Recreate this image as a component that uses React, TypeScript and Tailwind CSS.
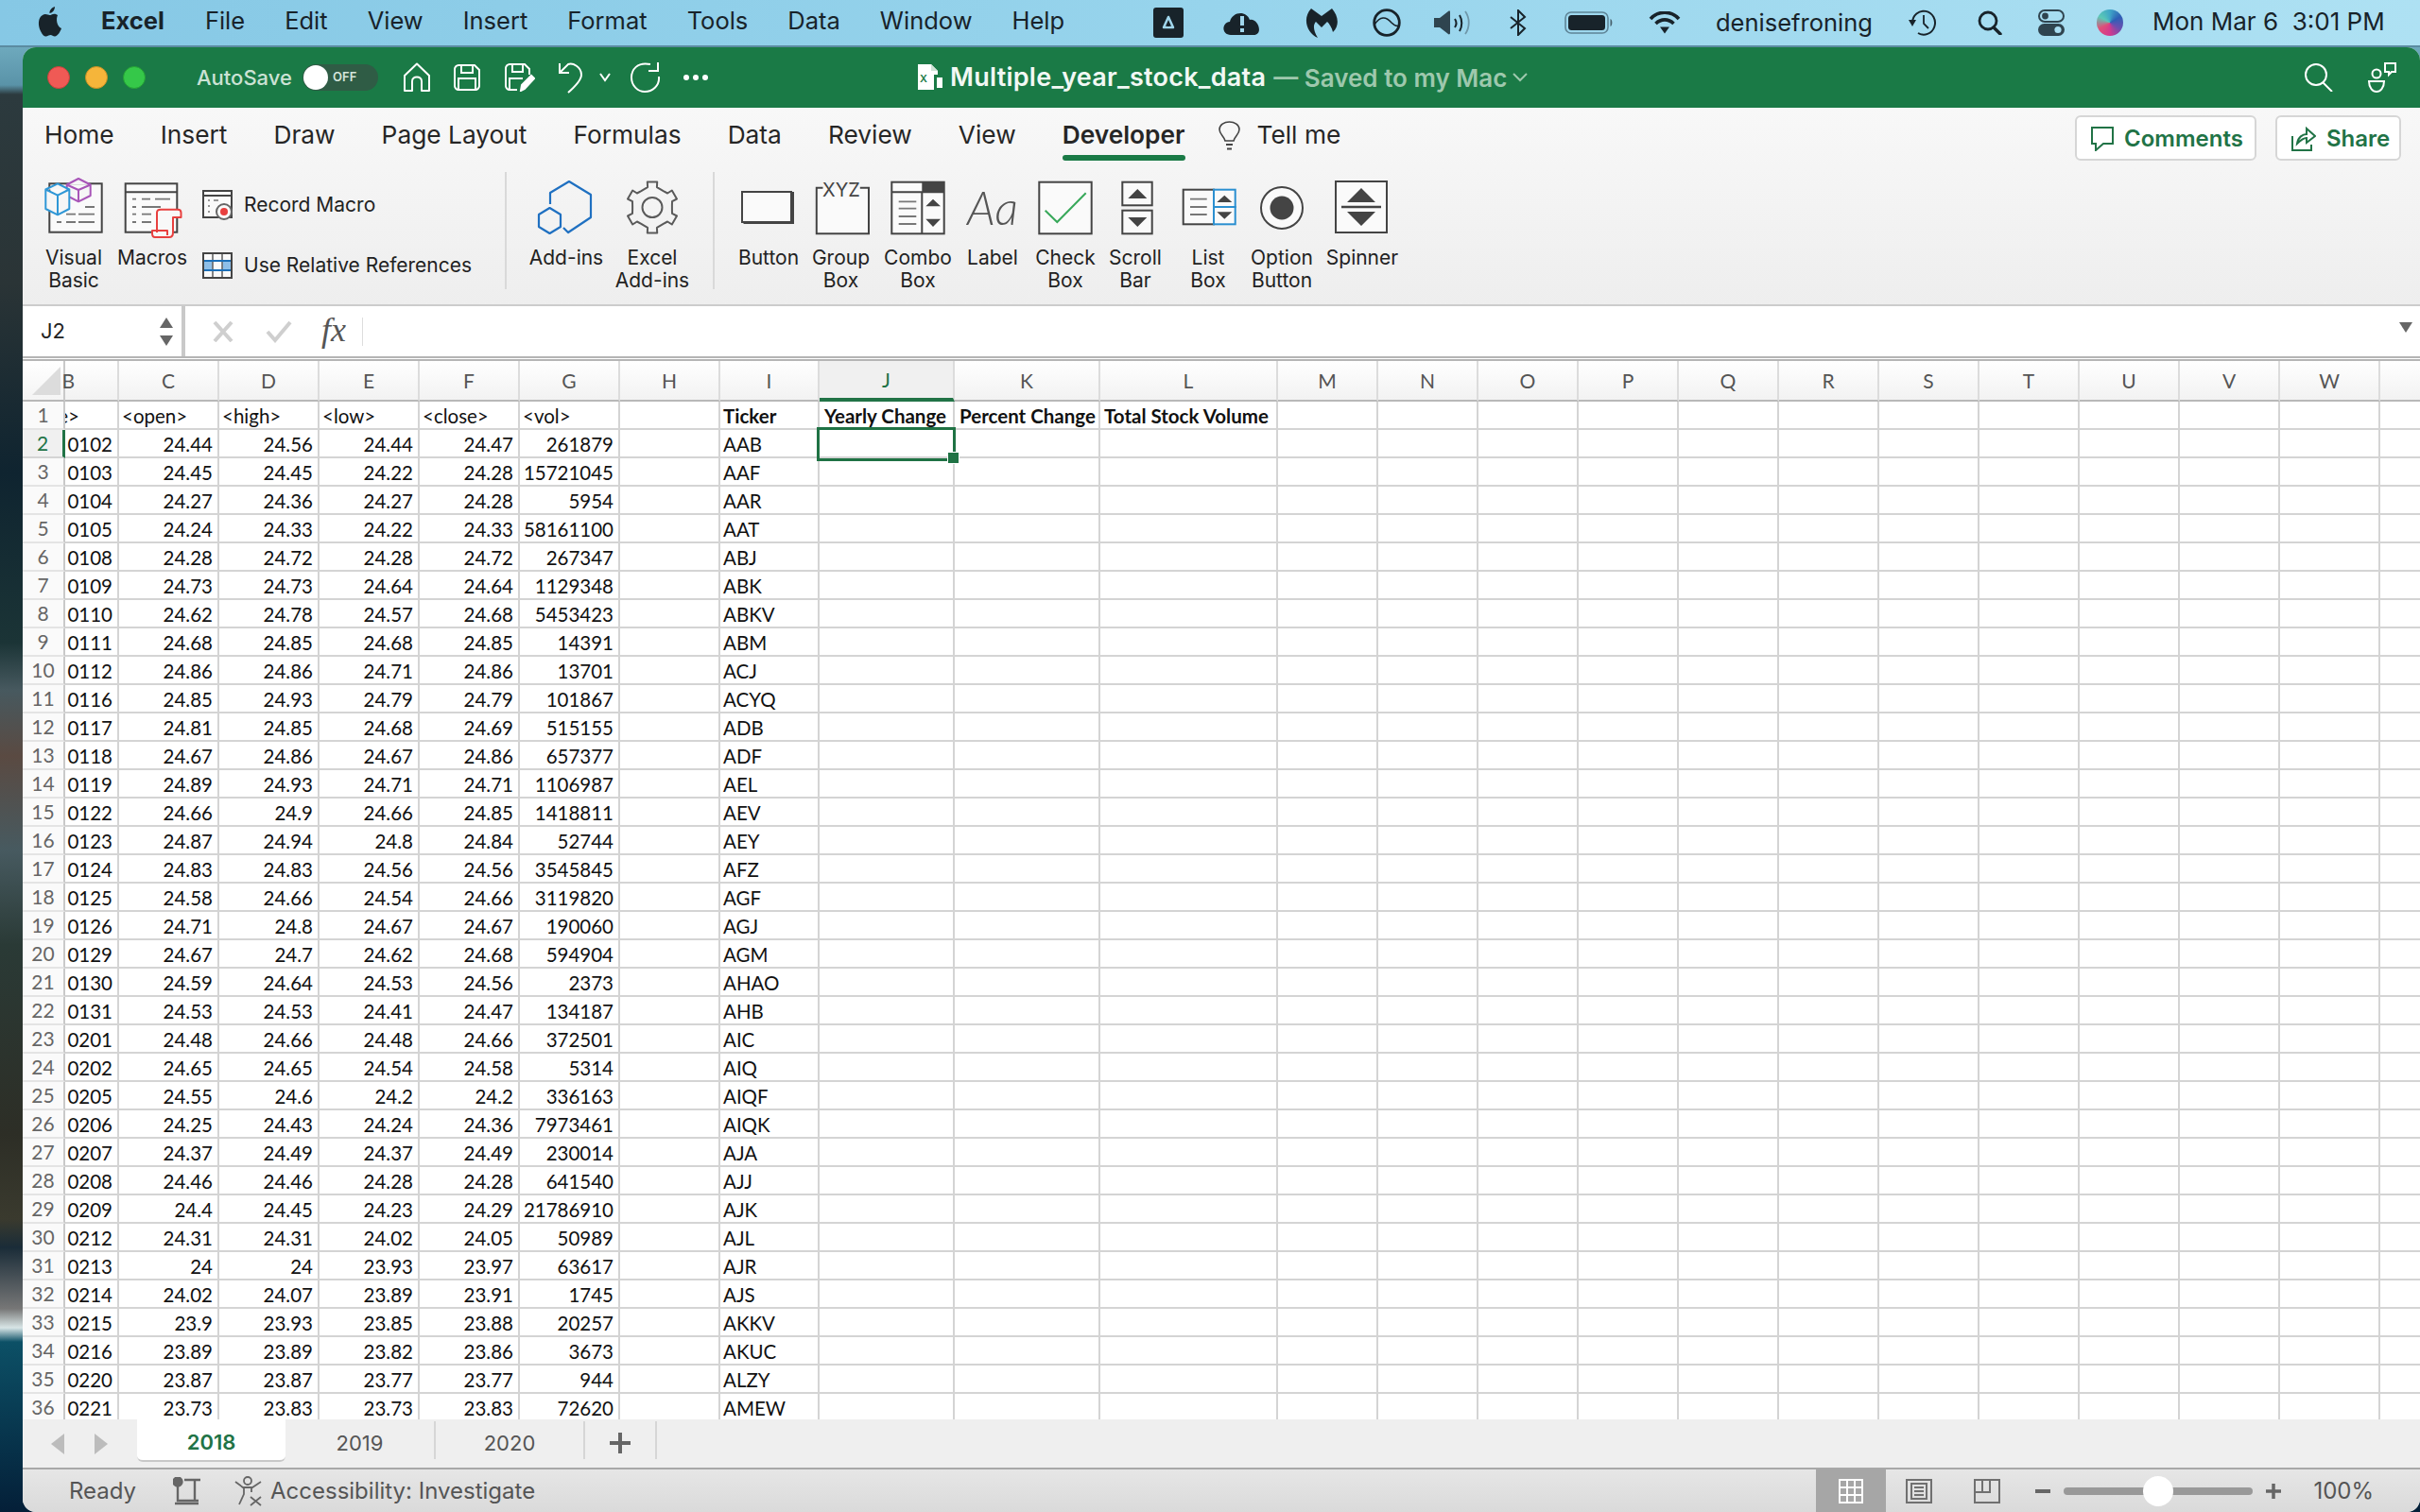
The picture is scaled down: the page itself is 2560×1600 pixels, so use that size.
import React from "react";

const S = "#444444";

const rowsData: string[][] = [
  ["0102","24.44","24.56","24.44","24.47","261879","AAB"],
  ["0103","24.45","24.45","24.22","24.28","15721045","AAF"],
  ["0104","24.27","24.36","24.27","24.28","5954","AAR"],
  ["0105","24.24","24.33","24.22","24.33","58161100","AAT"],
  ["0108","24.28","24.72","24.28","24.72","267347","ABJ"],
  ["0109","24.73","24.73","24.64","24.64","1129348","ABK"],
  ["0110","24.62","24.78","24.57","24.68","5453423","ABKV"],
  ["0111","24.68","24.85","24.68","24.85","14391","ABM"],
  ["0112","24.86","24.86","24.71","24.86","13701","ACJ"],
  ["0116","24.85","24.93","24.79","24.79","101867","ACYQ"],
  ["0117","24.81","24.85","24.68","24.69","515155","ADB"],
  ["0118","24.67","24.86","24.67","24.86","657377","ADF"],
  ["0119","24.89","24.93","24.71","24.71","1106987","AEL"],
  ["0122","24.66","24.9","24.66","24.85","1418811","AEV"],
  ["0123","24.87","24.94","24.8","24.84","52744","AEY"],
  ["0124","24.83","24.83","24.56","24.56","3545845","AFZ"],
  ["0125","24.58","24.66","24.54","24.66","3119820","AGF"],
  ["0126","24.71","24.8","24.67","24.67","190060","AGJ"],
  ["0129","24.67","24.7","24.62","24.68","594904","AGM"],
  ["0130","24.59","24.64","24.53","24.56","2373","AHAO"],
  ["0131","24.53","24.53","24.41","24.47","134187","AHB"],
  ["0201","24.48","24.66","24.48","24.66","372501","AIC"],
  ["0202","24.65","24.65","24.54","24.58","5314","AIQ"],
  ["0205","24.55","24.6","24.2","24.2","336163","AIQF"],
  ["0206","24.25","24.43","24.24","24.36","7973461","AIQK"],
  ["0207","24.37","24.49","24.37","24.49","230014","AJA"],
  ["0208","24.46","24.46","24.28","24.28","641540","AJJ"],
  ["0209","24.4","24.45","24.23","24.29","21786910","AJK"],
  ["0212","24.31","24.31","24.02","24.05","50989","AJL"],
  ["0213","24","24","23.93","23.97","63617","AJR"],
  ["0214","24.02","24.07","23.89","23.91","1745","AJS"],
  ["0215","23.9","23.93","23.85","23.88","20257","AKKV"],
  ["0216","23.89","23.89","23.82","23.86","3673","AKUC"],
  ["0220","23.87","23.87","23.77","23.77","944","ALZY"],
  ["0221","23.73","23.83","23.73","23.83","72620","AMEW"],
];

const wide = ["M","N","O","P","Q","R","S","T","U","V","W",""];

function MenuIcons() {
  return (
    <div className="flex items-center">
      <svg className="w-[32px] h-[32px] shrink-0" viewBox="0 0 32 32">
        <rect width="32" height="32" rx="3" fill="#18232a" />
        <path d="M11 21 L16 10 L21 21 Z" fill="none" stroke="#a0d6ec" strokeWidth="2.5" strokeLinejoin="round" />
        <path d="M14.5 20 L16 16.5 L17.5 20 Z" fill="#18232a" />
      </svg>
      <svg className="w-[40px] h-[28px] ml-[42px] shrink-0" viewBox="0 0 40 28">
        <path d="M8 27 C-2 27 -2 14 7 13 C9 3 24 0 28 11 C37 9 43 27 32 27 Z" fill="#18232a" />
        <rect x="18" y="7" width="4" height="10" fill="#a0d6ec" />
        <rect x="18" y="20" width="4" height="4" fill="#a0d6ec" />
      </svg>
      <svg className="w-[36px] h-[32px] ml-[46px] shrink-0" viewBox="0 0 36 32">
        <path d="M7 1 L18 9 L29 1 C35 8 38 18 30 26 C29 21 26 17 24 15 L18 21 L12 15 C9 18 9 24 14 32 C3 27 -3 12 7 1 Z" fill="#18232a" />
      </svg>
      <svg className="w-[30px] h-[30px] ml-[36px] shrink-0" viewBox="0 0 30 30">
        <circle cx="15" cy="15" r="13.3" fill="none" stroke="#18232a" strokeWidth="2.8" />
        <path d="M2 17 C8 8 14 8 20 15 C23 18 26 19 28 18" fill="none" stroke="#18232a" strokeWidth="1.6" />
      </svg>
      <svg className="w-[38px] h-[26px] ml-[35px] shrink-0" viewBox="0 0 38 26">
        <path d="M0 8 H6 L15 1 C17 0 17 1 17 2 V24 C17 25 16 26 15 25 L6 18 H0 Z" fill="#2f444f" />
        <path d="M22 9 C24 12 24 15 22 18" fill="none" stroke="#18232a" strokeWidth="2" />
        <path d="M27 5 C30 10 30 17 27 22" fill="none" stroke="#18232a" strokeWidth="2" />
        <path d="M33 1 C38 8 38 18 33 25" fill="none" stroke="#6f97a9" strokeWidth="1.8" />
      </svg>
      <svg className="w-[18px] h-[28px] ml-[42px] shrink-0" viewBox="0 0 18 28">
        <path d="M1 8 L16 20 L9 27 V1 L16 8 L1 20" fill="none" stroke="#18232a" strokeWidth="2" />
      </svg>
      <svg className="w-[52px] h-[24px] ml-[40px] shrink-0" viewBox="0 0 52 24">
        <rect x="1" y="1" width="45" height="22" rx="6" fill="none" stroke="#5e8496" strokeWidth="1.6" />
        <rect x="4" y="4" width="39" height="16" rx="3.5" fill="#18232a" />
        <path d="M48.5 8 C51 9 51 15 48.5 16 Z" fill="#47606c" />
      </svg>
      <svg className="w-[34px] h-[24px] ml-[37px] shrink-0" viewBox="0 0 34 24">
        <path d="M2 8 C10 -1 24 -1 32 8" fill="none" stroke="#18232a" strokeWidth="3.6" />
        <path d="M7.5 13 C13 7.5 21 7.5 26.5 13" fill="none" stroke="#18232a" strokeWidth="3.6" />
        <path d="M12 16.5 H22 L17 23.5 Z" fill="#18232a" />
      </svg>
      <span className="ml-[37px] text-[25.5px] text-[#18232a] w-[164px] whitespace-nowrap">denisefroning</span>
      <svg className="w-[32px] h-[28px] ml-[39px] shrink-0" viewBox="0 0 32 28">
        <path d="M5 14 A12 12.5 0 1 1 11 25" fill="none" stroke="#18232a" strokeWidth="2" />
        <path d="M1 11 L9 11 L5 18 Z" fill="#18232a" />
        <path d="M17 6 V15 L22 20" fill="none" stroke="#18232a" strokeWidth="1.8" />
      </svg>
      <svg className="w-[26px] h-[26px] ml-[42px] shrink-0" viewBox="0 0 26 26">
        <circle cx="11" cy="11" r="9" fill="none" stroke="#18232a" strokeWidth="2.8" />
        <path d="M17 18 L24 25" stroke="#18232a" strokeWidth="3.4" strokeLinecap="round" />
      </svg>
      <svg className="w-[28px] h-[28px] ml-[38px] shrink-0" viewBox="0 0 28 28">
        <rect x="1" y="1" width="26" height="12" rx="6" fill="none" stroke="#2f444f" strokeWidth="2" />
        <circle cx="7.5" cy="7" r="3.4" fill="#2f444f" />
        <rect y="15" width="28" height="13" rx="6.5" fill="#2f444f" />
        <circle cx="21" cy="21.5" r="3.6" fill="#a9def2" />
      </svg>
      <div className="w-[28px] h-[28px] ml-[34px] shrink-0 rounded-full bg-[conic-gradient(#3fa6c7,#2e5fb5,#6a4fb0,#d23a8e,#e04f78,#5bc8b6,#3fa6c7)]" />
      <span className="ml-[31px] -mt-[3px] text-[26px] text-[#18232a] whitespace-pre">Mon Mar 6  3:01 PM</span>
    </div>
  );
}

function MenuBar() {
  const items = ["File","Edit","View","Insert","Format","Tools","Data","Window","Help"];
  return (
    <div className="h-[50px] shrink-0 flex items-center border-b-2 border-[#5b8ba1] bg-[linear-gradient(90deg,#86c8e5,#97d4ec_50%,#aee1f3)]">
      <div className="w-[1220px] shrink-0 flex items-center pl-[40px] -mt-[3px]">
        <svg className="w-[26px] h-[32px] shrink-0" viewBox="0 0 26 32">
          <path d="M18 0 C18 4 15 7 12.5 7 C12 4 15 1 18 0 Z M21 9 C17 6 14 9 12.6 9 C11 9 8 7 5 9 C0 12 0 20 3 26 C5 30 7 32 9 31.5 C11 31 12 30 13.5 30 C15 30 16 31.5 18 31.5 C21 31.5 24 26 25 23 C20 21 19 13 21 9 Z" fill="#18232a" />
        </svg>
        <span className="ml-[41px] text-[25.5px] font-bold text-[#18232a]">Excel</span>
        <div className="ml-[43px] flex gap-[42px] text-[25.5px] text-[#18232a]">
          {items.map((t) => <span key={t}>{t}</span>)}
        </div>
      </div>
      <MenuIcons />
    </div>
  );
}

function TitleBar() {
  return (
    <div className="h-[64px] shrink-0 flex items-center bg-[#1a7a46] text-white">
      <div className="w-[946px] shrink-0 flex items-center pl-[26px]">
        <div className="w-[24px] h-[24px] rounded-full bg-[#ef5a55] border border-[#c8413d]" />
        <div className="w-[24px] h-[24px] rounded-full bg-[#f5b53a] border border-[#c48f25] ml-[16px]" />
        <div className="w-[24px] h-[24px] rounded-full bg-[#35c849] border border-[#25a035] ml-[16px]" />
        <span className="ml-[54px] w-[112px] text-[22px] font-medium text-[#cbe2d4]">AutoSave</span>
        <div className="w-[80px] h-[28px] rounded-full bg-[#2f5c45] flex items-center pl-[1px]">
          <div className="w-[26px] h-[26px] rounded-full bg-white" />
          <span className="ml-[5px] text-[13px] font-semibold text-[#d5e5db]">OFF</span>
        </div>
        <svg className="w-[30px] h-[32px] ml-[26px] shrink-0" viewBox="0 0 30 32" fill="none" stroke="#fff" strokeWidth="2">
          <path d="M2 14 L15 1.5 L28 14 V30 H20 V20 C20 14 10 14 10 20 V30 H2 Z" strokeLinejoin="round" />
        </svg>
        <svg className="w-[28px] h-[28px] ml-[24px] shrink-0" viewBox="0 0 28 28" fill="none" stroke="#fff" strokeWidth="2">
          <path d="M5 1 H22 L27 6 V23 C27 25 25 27 23 27 H5 C3 27 1 25 1 23 V5 C1 3 3 1 5 1 Z" />
          <path d="M8 1 V9 H20 V1 M5 27 V15 H23 V27" />
        </svg>
        <svg className="w-[32px] h-[30px] ml-[26px] shrink-0" viewBox="0 0 32 30" fill="none" stroke="#fff" strokeWidth="2">
          <path d="M13 28 H5 C3 28 1 26 1 24 V5 C1 3 3 1 5 1 H21 L26 6 V12" />
          <path d="M8 1 V9 H19 V1 M5 28 V16 H19" />
          <path d="M17 29 L18 23 L28 13 L31 16 L21 27 Z" fill="#fff" />
        </svg>
        <svg className="w-[28px] h-[34px] ml-[24px] shrink-0" viewBox="0 0 28 34" fill="none" stroke="#fff" strokeWidth="2">
          <path d="M2 2 V12 H12 M2 12 L11 3 C16 1 25 6 25 14 C25 20 19 26 11 33" />
        </svg>
        <svg className="w-[14px] h-[10px] ml-[15px] shrink-0" viewBox="0 0 14 10" fill="none" stroke="#fff" strokeWidth="2">
          <path d="M2 1 L7 8 L12 1" />
        </svg>
        <svg className="w-[34px] h-[34px] ml-[19px] shrink-0" viewBox="0 0 34 34" fill="none" stroke="#fff" strokeWidth="2">
          <path d="M22 3 C8 0 2 9 2 17 C2 26 9 32 16 32 C24 32 32 26 31 16" />
          <path d="M20 10 L30 10 L30 1" />
        </svg>
        <div className="ml-[23px] flex gap-[4px]">
          <div className="w-[6px] h-[6px] rounded-full bg-white" />
          <div className="w-[6px] h-[6px] rounded-full bg-white" />
          <div className="w-[6px] h-[6px] rounded-full bg-white" />
        </div>
      </div>
      <svg className="w-[30px] h-[30px] shrink-0" viewBox="0 0 30 30">
        <path d="M1 1 H15 L22 8 V28 H1 Z" fill="#fff" />
        <path d="M15 1 L22 8 H15 Z" fill="#cfe3d6" />
        <text x="3" y="20" fontSize="11" fontWeight="600" fill="#1a7a46">X</text>
        <rect x="18" y="12" width="11" height="16" fill="#1a7a46" />
        <rect x="21" y="15" width="6" height="11" fill="#fff" />
      </svg>
      <span className="ml-[5px] text-[27px] font-semibold tracking-[0.25px] text-[#f2f8f4] whitespace-nowrap">Multiple_year_stock_data</span>
      <span className="ml-[8px] text-[26px] font-semibold text-[#9ec8ad] whitespace-nowrap">— Saved to my Mac</span>
      <svg className="w-[16px] h-[10px] ml-[6px] shrink-0" viewBox="0 0 16 10" fill="none" stroke="#9ec8ad" strokeWidth="2">
        <path d="M1 1 L8 8 L15 1" />
      </svg>
      <svg className="w-[30px] h-[30px] ml-auto shrink-0" viewBox="0 0 30 30" fill="none" stroke="#fff" strokeWidth="2">
        <circle cx="12" cy="12" r="11" />
        <path d="M19 20 L29 30" />
      </svg>
      <svg className="w-[32px] h-[32px] ml-[36px] mr-[24px] shrink-0" viewBox="0 0 32 32" fill="none" stroke="#fff" strokeWidth="2">
        <circle cx="10" cy="12" r="4.5" />
        <path d="M2 20 H18 C18 27 14 31 10 31 C6 31 2 27 2 20 Z" />
        <path d="M19 1 H30 V10 H26 L23 13 V10 H19 Z" />
      </svg>
    </div>
  );
}

function RibbonTabs() {
  const tabs = ["Home","Insert","Draw","Page Layout","Formulas","Data","Review","View"];
  return (
    <div className="h-[72px] shrink-0 flex items-start pt-[8px] pl-[23px] pr-[20px]">
      <div className="flex gap-[49px] mt-[4px] text-[26.3px] text-[#262626]">
        {tabs.map((t) => <span key={t} className="leading-[34px] whitespace-nowrap">{t}</span>)}
        <div className="flex flex-col">
          <span className="leading-[34px] font-semibold whitespace-nowrap">Developer</span>
          <div className="mt-[4px] h-[6px] rounded-full bg-[#1a7a46]" />
        </div>
      </div>
      <div className="flex items-center mt-[4px] ml-[35px] h-[34px] gap-[18px] text-[26.3px] text-[#262626]">
        <svg className="w-[23px] h-[31px] shrink-0" viewBox="0 0 23 31" fill="none" stroke="#444" strokeWidth="1.6">
          <path d="M7 21 C6 16 1 14 1 9 C1 4 6 1 11.5 1 C17 1 22 4 22 9 C22 14 17 16 16 21 Z" />
          <path d="M8 25 H15 M9 29.5 H14" strokeWidth="2" />
        </svg>
        <span>Tell me</span>
      </div>
      <div className="ml-auto flex gap-[20px]">
        <div className="h-[48px] w-[192px] rounded-[6px] bg-white border-2 border-[#d6d6d6] flex items-center pl-[15px] pt-[2px] gap-[11px] text-[#217346] text-[24px] font-semibold">
          <svg className="w-[24px] h-[26px] shrink-0" viewBox="0 0 24 26" fill="none" stroke="#217346" strokeWidth="2">
            <path d="M1 1 H23 V18 H13 L5 25 V18 H1 Z" />
          </svg>
          Comments
        </div>
        <div className="h-[48px] w-[133px] rounded-[6px] bg-white border-2 border-[#d6d6d6] flex items-center pl-[15px] pt-[2px] gap-[11px] text-[#217346] text-[24px] font-semibold">
          <svg className="w-[26px] h-[26px] shrink-0" viewBox="0 0 26 26" fill="none" stroke="#217346" strokeWidth="2">
            <path d="M1 10 V25 H21 V19" />
            <path d="M6 18 C7 11 12 8 16 8 V2 L25 10 L16 17 V12 C12 12 9 15 6 18 Z" />
          </svg>
          Share
        </div>
      </div>
    </div>
  );
}

const Gear = () => {
  const pts: string[] = [];
  const cx = 36, cy = 33.5;
  for (let i = 0; i < 6; i++) {
    const a = -90 + i * 60;
    const pairs: [number, number][] = [[a - 26, 21], [a - 13, 22], [a - 11, 27.5], [a + 11, 27.5], [a + 13, 22], [a + 26, 21]];
    pairs.forEach(([d, r]) => {
      const t = (d * Math.PI) / 180;
      pts.push(`${(cx + r * Math.cos(t)).toFixed(1)},${(cy + r * Math.sin(t)).toFixed(1)}`);
    });
  }
  return (
    <svg className="w-[72px] h-[72px] shrink-0" viewBox="0 0 72 72" fill="none" stroke="#5a5a5a" strokeWidth="2">
      <polygon points={pts.join(" ")} strokeLinejoin="round" />
      <circle cx={cx} cy={cy} r="10.5" />
    </svg>
  );
};

const Box72 = ({ children }: { children: React.ReactNode }) => (
  <svg className="w-[72px] h-[72px] shrink-0" viewBox="0 0 72 72" fill="none">{children}</svg>
);

const Ribbon72 = {
  vb: (
    <Box72>
      <rect x="10.3" y="8.3" width="55.4" height="51.4" fill="#fafafa" stroke={S} strokeWidth="2" />
      <path d="M48 33 H58 M28 40.7 H38 M41 40.7 H58 M18 49 H23 M28 49 H38 M41 49 H58" stroke="#777" strokeWidth="1.8" />
      <path d="M41 3 L53.7 9.5 V21 L41 27.3 L28.7 21 V9.5 Z M28.7 9.5 L41 15 L53.7 9.5 M41 15 V27.3" fill="#f6f6f6" stroke="#a855b8" strokeWidth="2" strokeLinejoin="round" />
      <path d="M19 8.3 L31.3 14.5 V35 L19 41.3 L6.3 35 V14.5 Z M6.3 14.5 L19 20.7 L31.3 14.5 M19 20.7 V41.3" fill="#f6f6f6" stroke="#2f97d6" strokeWidth="2" strokeLinejoin="round" />
    </Box72>
  ),
  macros: (
    <Box72>
      <rect x="7.7" y="8.3" width="54.6" height="51.4" fill="#fafafa" stroke={S} strokeWidth="2" />
      <path d="M7.7 17.3 H62.3" stroke={S} strokeWidth="2" />
      <path d="M15 24.7 H19 M25 24.7 H34 M39 24.7 H55 M15 33 H19 M25 33 H45 M15 40.7 H19 M25 40.7 H35 M15 49 H19 M25 49 H35" stroke="#777" strokeWidth="1.8" />
      <path d="M41 60 V39 Q41 35.7 45 35.7 H63 Q66.5 35.7 66.5 39 V44 H58 V60 Q58 65 54 65 H39 Q36 65 36 61 V58 H52 V63" fill="#f8f8f8" stroke="#e8403f" strokeWidth="2" strokeLinejoin="round" />
    </Box72>
  ),
  addins: (
    <Box72>
      <path d="M19 30 V18 L39 6 L62 20 V44 L38 60 L33 55" stroke="#1f70c1" strokeWidth="2.2" strokeLinejoin="round" />
      <path d="M18.5 34 L30 41 V54 L18.5 61 L7 54 V41 Z" stroke="#1f70c1" strokeWidth="2.2" strokeLinejoin="round" />
    </Box72>
  ),
  button: (
    <Box72>
      <rect x="8" y="17" width="52" height="32" fill="#fafafa" stroke={S} strokeWidth="2" />
      <path d="M60 17 H63 V51 H10 L8 49 H60 Z" fill={S} />
    </Box72>
  ),
  group: (
    <Box72>
      <path d="M16.5 12.7 H9.8 V61.3 H65 V12.7 H55.8" fill="#fafafa" stroke={S} strokeWidth="2" />
      <text x="36" y="21.5" textAnchor="middle" fontSize="20" fill={S} stroke="none">XYZ</text>
    </Box72>
  ),
  combo: (
    <Box72>
      <rect x="8.3" y="6.7" width="55.4" height="54.6" fill="#fafafa" stroke={S} strokeWidth="2" />
      <rect x="40.3" y="6.7" width="23.4" height="10.6" fill={S} />
      <path d="M8.3 17.3 H63.7 M40.3 17.3 V61.3" stroke={S} strokeWidth="2" />
      <path d="M15.7 27.3 H34.3 M15.7 34.7 H34.3 M15.7 43 H34.3 M15.7 51 H34.3" stroke="#777" strokeWidth="1.8" />
      <path d="M52 24.7 L60 32.3 H44.3 Z M44.3 45.7 H60 L52 54 Z" fill={S} />
    </Box72>
  ),
  check: (
    <Box72>
      <rect x="8.3" y="6.7" width="55.4" height="54.6" fill="#fafafa" stroke={S} strokeWidth="2" />
      <path d="M14.7 36.7 L27.3 49 L57.7 18.3" stroke="#38a85a" strokeWidth="2" />
    </Box72>
  ),
  scroll: (
    <Box72>
      <rect x="22.3" y="6.7" width="31.4" height="24.6" fill="#fafafa" stroke={S} strokeWidth="2" />
      <rect x="22.3" y="36.7" width="31.4" height="24.6" fill="#fafafa" stroke={S} strokeWidth="2" />
      <path d="M38.3 14 L48.3 24 H28.3 Z M28.3 44 H48.3 L38.3 54 Z" fill={S} />
    </Box72>
  ),
  list: (
    <Box72>
      <rect x="9.7" y="14.7" width="32.3" height="36.6" fill="#fafafa" stroke={S} strokeWidth="2" />
      <path d="M17 24.7 H34.7 M17 33 H34.7 M17 41 H34.7" stroke="#777" strokeWidth="1.8" />
      <rect x="42" y="14.7" width="22.7" height="18.3" fill="#fafafa" stroke="#2b8fd0" strokeWidth="2" />
      <rect x="42" y="33" width="22.7" height="18.3" fill="#fafafa" stroke="#2b8fd0" strokeWidth="2" />
      <path d="M53.3 20.7 L61.3 28 H45.3 Z M45.3 38.3 H61.3 L53.3 45.7 Z" fill={S} />
    </Box72>
  ),
  option: (
    <Box72>
      <circle cx="36" cy="34" r="22" fill="#fafafa" stroke={S} strokeWidth="2" />
      <circle cx="36" cy="34" r="12.5" fill={S} />
    </Box72>
  ),
  spinner: (
    <Box72>
      <rect x="8" y="6" width="54" height="54" fill="#fafafa" stroke={S} strokeWidth="2" />
      <path d="M14 33 H56" stroke={S} strokeWidth="2.4" />
      <path d="M35 13 L50 28 H20 Z M20 38 H50 L35 53 Z" fill={S} />
    </Box72>
  ),
};

function RibbonItem({ w, icon, lines }: { w: string; icon: React.ReactNode; lines: string[] }) {
  return (
    <div className={`${w} shrink-0 flex flex-col items-center`}>
      <div className="h-[75px] w-[72px] shrink-0">{icon}</div>
      {lines.map((l) => (
        <span key={l} className="leading-[24px] text-[21px] text-[#222222] whitespace-nowrap">{l}</span>
      ))}
    </div>
  );
}

function RibbonBody() {
  return (
    <div className="flex items-start pl-[16px] pt-0">
      <RibbonItem w="w-[76px]" icon={Ribbon72.vb} lines={["Visual", "Basic"]} />
      <RibbonItem w="w-[90px]" icon={Ribbon72.macros} lines={["Macros"]} />
      <div className="ml-[8px] w-[321px] shrink-0 pt-[15px] text-[21px] text-[#222222]">
        <div className="flex items-center gap-[12px] h-[32px]">
          <svg className="w-[32px] h-[32px] shrink-0" viewBox="0 0 32 32" fill="none">
            <rect x="1" y="1" width="30" height="28" fill="#fafafa" stroke={S} strokeWidth="2" />
            <path d="M1 6 H31" stroke={S} strokeWidth="2" />
            <path d="M6 11 H8 M12 11 H17 M6 17 H8 M6 23 H8" stroke="#777" strokeWidth="1.6" />
            <circle cx="23" cy="23" r="8" fill="#fafafa" stroke="#666" strokeWidth="2" />
            <circle cx="23" cy="23" r="4" fill="#e8403f" />
          </svg>
          <span>Record Macro</span>
        </div>
        <div className="flex items-center gap-[12px] h-[32px] mt-[32px]">
          <svg className="w-[32px] h-[28px] shrink-0" viewBox="0 0 32 28" fill="none">
            <rect x="1" y="1" width="30" height="26" fill="#fafafa" />
            <rect x="1" y="9" width="10" height="10" fill="#8ebfe8" />
            <rect x="21" y="9" width="10" height="10" fill="#8ebfe8" />
            <path d="M11 1 V27 M21 1 V27" stroke="#666" strokeWidth="1.6" />
            <path d="M1 9 H31 M1 19 H31" stroke="#1b6fb8" strokeWidth="2" />
            <rect x="1" y="1" width="30" height="26" stroke={S} strokeWidth="2" />
          </svg>
          <span>Use Relative References</span>
        </div>
      </div>
      <div className="w-[2px] h-[124px] -mt-[4px] -ml-[1px] bg-[#d9d9d9] shrink-0" />
      <RibbonItem w="w-[98px] ml-[14px]" icon={Ribbon72.addins} lines={["Add-ins"]} />
      <RibbonItem w="w-[84px]" icon={<Gear />} lines={["Excel", "Add-ins"]} />
      <div className="w-[2px] h-[124px] -mt-[4px] ml-[22px] bg-[#d9d9d9] shrink-0" />
      <RibbonItem w="w-[86px] ml-[14px]" icon={Ribbon72.button} lines={["Button"]} />
      <RibbonItem w="w-[67px]" icon={Ribbon72.group} lines={["Group", "Box"]} />
      <RibbonItem w="w-[96px]" icon={Ribbon72.combo} lines={["Combo", "Box"]} />
      <div className="w-[62px] shrink-0 flex flex-col items-center">
        <div className="h-[75px] w-[72px] shrink-0 flex justify-center pt-[3px] [font-family:Lato,sans-serif] italic font-light text-[49px] leading-[60px] text-[#555555]">Aa</div>
        <span className="leading-[24px] text-[21px] text-[#222222]">Label</span>
      </div>
      <RibbonItem w="w-[92px]" icon={Ribbon72.check} lines={["Check", "Box"]} />
      <RibbonItem w="w-[56px]" icon={Ribbon72.scroll} lines={["Scroll", "Bar"]} />
      <RibbonItem w="w-[98px]" icon={Ribbon72.list} lines={["List", "Box"]} />
      <RibbonItem w="w-[58px]" icon={Ribbon72.option} lines={["Option", "Button"]} />
      <RibbonItem w="w-[112px]" icon={Ribbon72.spinner} lines={["Spinner"]} />
    </div>
  );
}

function FormulaBar() {
  return (
    <div className="h-[53px] shrink-0 bg-white flex items-stretch">
      <div className="w-[172px] shrink-0 border-r-[4px] border-[#c9c9c9] flex items-center pl-[19px] pr-[9px]">
        <span className="text-[22px] text-[#222222]">J2</span>
        <div className="ml-auto flex flex-col gap-[8px]">
          <div className="w-0 h-0 border-x-[7px] border-x-transparent border-b-[11px] border-b-[#666666]" />
          <div className="w-0 h-0 border-x-[7px] border-x-transparent border-t-[11px] border-t-[#666666]" />
        </div>
      </div>
      <div className="flex items-center flex-1 pl-[29px]">
        <svg className="w-[22px] h-[22px] shrink-0" viewBox="0 0 22 22" stroke="#cfcfcf" strokeWidth="4">
          <path d="M2 1 L20 21 M20 1 L2 21" />
        </svg>
        <svg className="w-[28px] h-[24px] ml-[34px] shrink-0" viewBox="0 0 28 24" fill="none" stroke="#cfcfcf" strokeWidth="4">
          <path d="M2 12 L10 21 L26 2" />
        </svg>
        <span className="ml-[31px] -mt-[3px] [font-family:'Liberation_Serif',serif] italic text-[36px] text-[#555555]">fx</span>
        <div className="ml-[17px] w-[1px] h-[30px] bg-[#dddddd]" />
        <div className="ml-auto mr-[8px] -mt-[8px] w-0 h-0 border-x-[7px] border-x-transparent border-t-[11px] border-t-[#666666]" />
      </div>
    </div>
  );
}

const hdrBase = "h-[43px] shrink-0 flex items-center justify-center border-r-2 border-[#dcdcdc] border-b-2 border-b-[#b8b8b8] bg-[linear-gradient(180deg,#ffffff,#f2f2f2)] text-[#555555] text-[21px]";
const cellBase = "h-[30px] shrink-0 flex items-center pt-[2px] border-r-2 border-b-2 border-[#d4d4d4] overflow-hidden text-[20.5px] text-[#111111] whitespace-nowrap";
const W = "w-[106px]";

function ColHeader() {
  return (
    <div className="flex">
      <div className="w-[45px] h-[43px] shrink-0 flex items-center pl-[10px] border-r-2 border-[#c9c9c9] border-b-2 border-b-[#b8b8b8] bg-[linear-gradient(180deg,#ffffff,#f4f4f4)]">
        <svg className="w-[30px] h-[30px]" viewBox="0 0 30 30"><path d="M30 0 V30 H0 Z" fill="#dcdcdc" /></svg>
      </div>
      <div className={`w-[57px] ${hdrBase} !justify-end pr-[45px]`}>B</div>
      {["C","D","E","F","G","H"].map((c) => <div key={c} className={`${W} ${hdrBase}`}>{c}</div>)}
      <div className={`w-[105px] ${hdrBase}`}>I</div>
      <div className="w-[143px] h-[43px] shrink-0 flex items-center justify-center border-r-2 border-[#dcdcdc] border-b-4 border-b-[#217346] bg-[#f0f0f0] text-[#217346] text-[21px]">J</div>
      <div className={`w-[154px] ${hdrBase}`}>K</div>
      <div className={`w-[188px] ${hdrBase}`}>L</div>
      {wide.map((c, i) => <div key={i} className={`${W} ${hdrBase}`}>{c}</div>)}
    </div>
  );
}

function RowHead({ n }: { n: number }) {
  if (n === 2)
    return (
      <div className="w-[45px] h-[30px] shrink-0 flex items-center justify-center bg-[#f0f0f0] border-r-[3px] border-r-[#217346] border-b-2 border-b-[#d4d4d4] text-[21px] text-[#217346]">{n}</div>
    );
  return (
    <div className="w-[45px] h-[30px] shrink-0 flex items-center justify-center border-r-2 border-r-[#c9c9c9] border-b-2 border-b-[#e4e4e4] bg-[#fafafa] text-[21px] text-[#666666]">{n}</div>
  );
}

function TrailingCells() {
  return (
    <>
      {wide.map((c, i) => <div key={i} className={`${W} ${cellBase}`} />)}
    </>
  );
}

function SheetHeaderRow() {
  const left = "pl-[3px]";
  return (
    <div className="flex">
      <RowHead n={1} />
      <div className={`w-[57px] ${cellBase} justify-end pr-[40px]`}>e&gt;</div>
      {["<open>","<high>","<low>","<close>","<vol>"].map((t) => <div key={t} className={`${W} ${cellBase} ${left}`}>{t}</div>)}
      <div className={`${W} ${cellBase}`} />
      <div className={`w-[105px] ${cellBase} ${left} font-bold`}>Ticker</div>
      <div className={`w-[143px] ${cellBase} pl-[5px] font-bold`}>Yearly Change</div>
      <div className={`w-[154px] ${cellBase} pl-[5px] font-bold`}>Percent Change</div>
      <div className={`w-[188px] ${cellBase} pl-[4px] font-bold`}>Total Stock Volume</div>
      <TrailingCells />
    </div>
  );
}

function DataRow({ n, d }: { n: number; d: string[] }) {
  return (
    <div className="flex">
      <RowHead n={n} />
      <div className={`w-[57px] ${cellBase} justify-end pr-[5px]`}>{d[0]}</div>
      {d.slice(1, 6).map((v, i) => (
        <div key={i} className={`${W} ${cellBase} justify-end pr-[5px]`}>{v}</div>
      ))}
      <div className={`${W} ${cellBase}`} />
      <div className={`w-[105px] ${cellBase} pl-[3px]`}>{d[6]}</div>
      {n === 2 ? (
        <div className="w-[143px] h-[30px] shrink-0 relative border-r-2 border-b-2 border-[#d4d4d4]">
          <div className="absolute -left-[3px] -top-[3px] w-[147px] h-[36px] border-[3px] border-[#1f7244] z-10">
            <div className="absolute -right-[6px] -bottom-[5px] w-[11px] h-[11px] bg-[#1f7244] outline-1 outline-white" />
          </div>
        </div>
      ) : (
        <div className={`w-[143px] ${cellBase}`} />
      )}
      <div className={`w-[154px] ${cellBase}`} />
      <div className={`w-[188px] ${cellBase}`} />
      <TrailingCells />
    </div>
  );
}

function Sheet() {
  return (
    <div className="h-[1120px] shrink-0 overflow-hidden bg-white [font-family:Lato,sans-serif]">
      <ColHeader />
      <SheetHeaderRow />
      {rowsData.map((d, i) => <DataRow key={i} n={i + 2} d={d} />)}
    </div>
  );
}

function SheetTabs() {
  return (
    <div className="h-[53px] shrink-0 bg-[#efefef] border-b-2 border-[#a8a8a8] flex items-start text-[22px] text-[#555555]">
      <div className="w-[121px] h-[45px] shrink-0 flex items-center pl-[30px] pt-[7px] gap-[32px]">
        <div className="w-0 h-0 border-y-[11px] border-y-transparent border-r-[14px] border-r-[#bcbcbc]" />
        <div className="w-0 h-0 border-y-[11px] border-y-transparent border-l-[14px] border-l-[#bcbcbc]" />
      </div>
      <div className="w-[157px] h-[45px] shrink-0 bg-white rounded-b-[6px] border-b-2 border-[#c8c8c8] flex items-center justify-center pt-[6px] font-semibold text-[#217346]">2018</div>
      <div className="w-[159px] h-[40px] mt-[2px] pt-[6px] shrink-0 flex items-center justify-center border-r-2 border-[#d6d6d6]">2019</div>
      <div className="w-[158px] h-[40px] mt-[2px] pt-[6px] shrink-0 flex items-center justify-center border-r-2 border-[#d6d6d6]">2020</div>
      <div className="w-[76px] h-[40px] mt-[2px] pt-[6px] shrink-0 flex items-center justify-center border-r-2 border-[#d6d6d6] text-[#666666]">
        <svg className="w-[22px] h-[22px]" viewBox="0 0 22 22"><path d="M11 0 V22 M0 11 H22" stroke="#666" strokeWidth="4" /></svg>
      </div>
    </div>
  );
}

function StatusBar() {
  return (
    <div className="flex-1 flex items-center bg-[linear-gradient(180deg,#e6e6e6,#dadada)] text-[24px] text-[#555555]">
      <span className="ml-[49px] w-[110px] shrink-0">Ready</span>
      <svg className="w-[30px] h-[30px] shrink-0" viewBox="0 0 30 30" fill="none" stroke="#666" strokeWidth="2.4">
        <circle cx="5" cy="5" r="4.5" fill="#666" />
        <path d="M5 10 V25 H27 M12 3 H29 M23 3 V25 M2 28 H27" />
      </svg>
      <svg className="w-[32px] h-[32px] ml-[34px] shrink-0" viewBox="0 0 32 32" fill="none" stroke="#666" strokeWidth="1.8">
        <circle cx="15" cy="5" r="4" />
        <path d="M2 6 L10 12 H20 L29 6 M11 12 V19 L6 30 M19 12 V17 M18 22 L29 31 M29 22 L18 31" />
      </svg>
      <span className="ml-[7px] whitespace-nowrap">Accessibility: Investigate</span>
      <div className="ml-auto w-[74px] h-full shrink-0 bg-[#a6a6a6] flex items-center justify-center">
        <svg className="w-[26px] h-[26px]" viewBox="0 0 26 26" fill="#fff">
          <path d="M0 0 H26 V26 H0 Z M2 2 V8 H8 V2 Z M10 2 V8 H16 V2 Z M18 2 V8 H24 V2 Z M2 10 V16 H8 V10 Z M10 10 V16 H16 V10 Z M18 10 V16 H24 V10 Z M2 18 V24 H8 V18 Z M10 18 V24 H16 V18 Z M18 18 V24 H24 V18 Z" fillRule="evenodd" />
        </svg>
      </div>
      <svg className="w-[28px] h-[26px] ml-[21px] shrink-0" viewBox="0 0 28 26" fill="none" stroke="#707070" strokeWidth="2">
        <rect x="1" y="1" width="26" height="24" />
        <rect x="6" y="5" width="16" height="16" />
        <path d="M9 9 H19 M9 13 H19 M9 17 H19" />
      </svg>
      <svg className="w-[28px] h-[26px] ml-[44px] shrink-0" viewBox="0 0 28 26" fill="none" stroke="#707070" strokeWidth="2">
        <rect x="1" y="1" width="26" height="24" />
        <path d="M1 14 H17 V1 M9 1 V14" />
      </svg>
      <div className="w-[16px] h-[4px] ml-[37px] bg-[#666666] shrink-0" />
      <div className="w-[200px] h-[8px] ml-[14px] rounded-full bg-[#999999] shrink-0 flex items-center">
        <div className="w-[32px] h-[32px] ml-[84px] rounded-full bg-white shrink-0" />
      </div>
      <svg className="w-[16px] h-[16px] ml-[14px] shrink-0" viewBox="0 0 16 16"><path d="M8 0 V16 M0 8 H16" stroke="#666" strokeWidth="3.5" /></svg>
      <span className="ml-[34px] mr-[49px] text-[#555555]">100%</span>
    </div>
  );
}

export default function App() {
  return (
    <div className="w-[2560px] h-[1600px] flex flex-col overflow-hidden [font-family:Inter,'Liberation_Sans',sans-serif] bg-[linear-gradient(180deg,#6ea9bd_50px,#5a93a8_90px,#2c3a3e_100px,#2a3436_300px,#0f2430_500px,#1b3436_680px,#47595f_730px,#5a4a42_800px,#475a60_900px,#2a3a36_1000px,#2d2e26_1200px,#3a3a2e_1290px,#1a2c38_1320px,#777_1385px,#d8e5e6_1405px,#0c5066_1420px,#041f38_1600px)]">
      <MenuBar />
      <div className="flex-1 min-h-0 ml-[24px] flex flex-col rounded-t-[14px] rounded-bl-[14px] rounded-br-[14px] overflow-hidden bg-[#efefef]">
        <TitleBar />
        <div className="h-[208px] shrink-0 flex flex-col bg-[linear-gradient(180deg,#f8f8f8,#eeeeee)]">
          <RibbonTabs />
          <RibbonBody />
        </div>
        <div className="h-[2px] shrink-0 bg-[#cccccc]" />
        <FormulaBar />
        <div className="h-[5px] shrink-0 bg-white border-y-2 border-[#b5b5b5]" />
        <Sheet />
        <SheetTabs />
        <StatusBar />
      </div>
    </div>
  );
}
